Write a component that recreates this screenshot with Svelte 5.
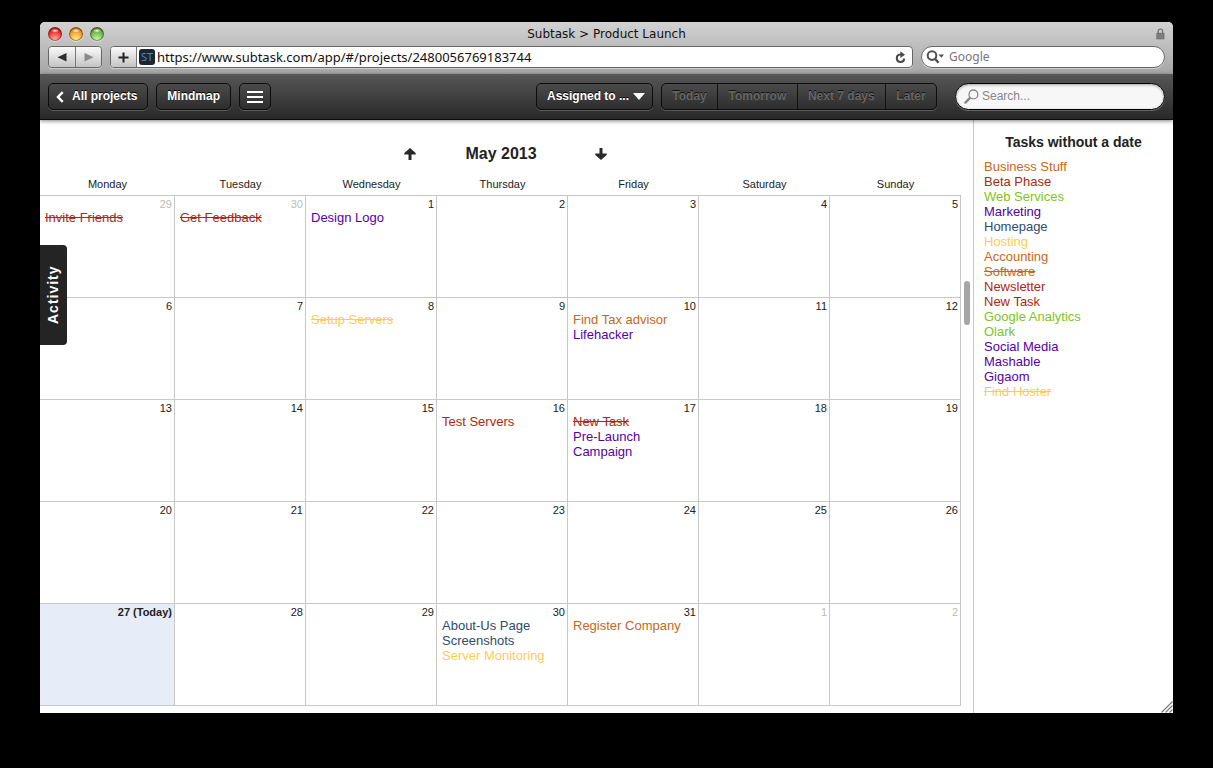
<script>
  const weekdays = ['Monday', 'Tuesday', 'Wednesday', 'Thursday', 'Friday', 'Saturday', 'Sunday'];
  const ranges = ['Today', 'Tomorrow', 'Next 7 days', 'Later'];

  const tasksByDay = {
    'prev-29': [{ name: 'Invite Friends', color: 'red', done: true }],
    'prev-30': [{ name: 'Get Feedback', color: 'red', done: true }],
    'may-1': [{ name: 'Design Logo', color: 'purple' }],
    'may-8': [{ name: 'Setup Servers', color: 'yellow', done: true }],
    'may-10': [
      { name: 'Find Tax advisor', color: 'orange' },
      { name: 'Lifehacker', color: 'purple' }
    ],
    'may-16': [{ name: 'Test Servers', color: 'red' }],
    'may-17': [
      { name: 'New Task', color: 'red', done: true },
      { name: 'Pre-Launch Campaign', color: 'purple' }
    ],
    'may-30': [
      { name: 'About-Us Page Screenshots', color: 'navy' },
      { name: 'Server Monitoring', color: 'yellow' }
    ],
    'may-31': [{ name: 'Register Company', color: 'orange' }]
  };

  const undated = [
    { name: 'Business Stuff', color: 'orange' },
    { name: 'Beta Phase', color: 'red' },
    { name: 'Web Services', color: 'green' },
    { name: 'Marketing', color: 'purple' },
    { name: 'Homepage', color: 'navy' },
    { name: 'Hosting', color: 'yellow' },
    { name: 'Accounting', color: 'orange' },
    { name: 'Software', color: 'orange', done: true },
    { name: 'Newsletter', color: 'red' },
    { name: 'New Task', color: 'red' },
    { name: 'Google Analytics', color: 'green' },
    { name: 'Olark', color: 'green' },
    { name: 'Social Media', color: 'purple' },
    { name: 'Mashable', color: 'purple' },
    { name: 'Gigaom', color: 'purple' },
    { name: 'Find Hoster', color: 'yellow', done: true }
  ];

  const today = 27;

  // Five weeks starting on Monday 29 April
  const weeks = Array.from({ length: 5 }, (_, w) =>
    Array.from({ length: 7 }, (_, d) => {
      const n = w * 7 + d - 1;
      const month = n < 1 ? 'prev' : n > 31 ? 'next' : 'may';
      const day = n < 1 ? n + 30 : n > 31 ? n - 31 : n;
      return { day, month, today: month === 'may' && day === today, tasks: tasksByDay[`${month}-${day}`] ?? [] };
    })
  );
</script>

{#snippet taskList(tasks)}
  <ul class="tasks">
    {#each tasks as task}
      <li class="task {task.color}" class:done={task.done}>{task.name}</li>
    {/each}
  </ul>
{/snippet}

<div class="window">
  <header class="chrome">
    <div class="titlebar">
      <div class="lights">
        <button class="light close" aria-label="Close"></button>
        <button class="light minimize" aria-label="Minimize"></button>
        <button class="light zoom" aria-label="Zoom"></button>
      </div>
      <div class="title">Subtask &gt; Product Launch</div>
      <svg class="lock" width="9" height="12" viewBox="0 0 9 12" aria-hidden="true">
        <path d="M2.2 5.5V3.2a2.2 2.2 0 0 1 4.4 0v2.3" fill="none" stroke="#6f6f6f" stroke-width="1.2" />
        <rect x="0.9" y="5.4" width="7" height="5.4" fill="#8a8a8a" stroke="#6c6c6c" />
        <path d="M1.5 7.2h6M1.5 9h6" stroke="#6f6f6f" stroke-width="0.8" />
      </svg>
    </div>
    <div class="toolbar">
      <div class="nav">
        <button aria-label="Back"><svg width="10" height="10" viewBox="0 0 10 10"><path d="M9.5 1v8.4L0.5 5.2z" fill="#2e2e2e" /></svg></button>
        <button aria-label="Forward"><svg width="10" height="10" viewBox="0 0 10 10"><path d="M0.5 1v8.4L9.5 5.2z" fill="#8b8b8b" /></svg></button>
      </div>
      <div class="address">
        <button class="plus" aria-label="Add bookmark"><svg width="11" height="11" viewBox="0 0 11 11"><path d="M5.5 0.5v10M0.5 5.5h10" stroke="#222" stroke-width="2" /></svg></button>
        <span class="favicon">ST</span>
        <input class="url" aria-label="Address" value="https://www.subtask.com/app/#/projects/2480056769183744" />
        <button class="reload" aria-label="Reload">
          <svg width="13" height="13" viewBox="0 0 13 13"><path d="M8.2 3.600H6.200a3.700 3.700 0 1 0 4 4" fill="none" stroke="#4a4a4a" stroke-width="2" /><path d="M6.400 0.300l4.600 3.500-4.600 3.100z" fill="#4a4a4a" /></svg>
        </button>
      </div>
      <label class="google">
        <svg width="19" height="14" viewBox="0 0 19 14"><circle cx="6" cy="5.6" r="4.3" fill="none" stroke="#505050" stroke-width="2" /><path d="M9 8.8l3.6 3.9" stroke="#505050" stroke-width="2.4" /><path d="M12.6 4.6h5.4l-2.7 3.2z" fill="#505050" /></svg>
        <input type="text" placeholder="Google" aria-label="Google" />
      </label>
    </div>
  </header>

  <nav class="appbar">
    <button class="btn back">
      <svg width="8" height="12" viewBox="0 0 8 12" aria-hidden="true"><path d="M6.7 1.2L2 6l4.7 4.8" fill="none" stroke="#fff" stroke-width="2.4" /></svg>
      All projects
    </button>
    <button class="btn">Mindmap</button>
    <button class="btn menu" aria-label="Menu">
      <svg width="16" height="12" viewBox="0 0 16 12"><path d="M0 1h16M0 6h16M0 11h16" stroke="#fff" stroke-width="2" /></svg>
    </button>
    <div class="spacer"></div>
    <div class="assigned">
      <select class="btn" aria-label="Assigned to">
        <option>Assigned to ...</option>
      </select>
      <svg width="12" height="7" viewBox="0 0 12 7" aria-hidden="true"><path d="M0 0h12L6 7z" fill="#fff" /></svg>
    </div>
    <div class="segments">
      {#each ranges as range}
        <button>{range}</button>
      {/each}
    </div>
    <label class="search">
      <svg width="15" height="15" viewBox="0 0 15 15"><circle cx="9.4" cy="5.4" r="4.4" fill="none" stroke="#888" stroke-width="1.3" /><path d="M5.8 9.2L1.4 13.6" stroke="#888" stroke-width="2.4" stroke-linecap="round" /></svg>
      <input type="text" placeholder="Search..." aria-label="Search" />
    </label>
  </nav>

  <main class="content">
    <section class="calendar">
      <div class="month">
        <button aria-label="Previous month"><svg width="12" height="12" viewBox="0 0 12 12"><path d="M6 0l5.700 5v1.500H7.500V12h-3V6.500H0.300V5z" fill="#2a2a2a" /></svg></button>
        <h1>May 2013</h1>
        <button aria-label="Next month"><svg width="12" height="12" viewBox="0 0 12 12"><path d="M6 12L0.300 7V5.500h4.200V0h3v5.500h4.200V7z" fill="#2a2a2a" /></svg></button>
      </div>
      <table>
        <thead>
          <tr>
            {#each weekdays as name}
              <th scope="col">{name}</th>
            {/each}
          </tr>
        </thead>
        <tbody>
          {#each weeks as week}
            <tr>
              {#each week as cell}
                <td class:today={cell.today}>
                  <div class="date" class:other={cell.month !== 'may'}>{cell.day}{cell.today ? ' (Today)' : ''}</div>
                  {#if cell.tasks.length}
                    {@render taskList(cell.tasks)}
                  {/if}
                </td>
              {/each}
            </tr>
          {/each}
        </tbody>
      </table>
      <div class="thumb"></div>
      <button class="activity">Activity</button>
    </section>

    <aside class="sidebar">
      <h2>Tasks without a date</h2>
      {@render taskList(undated)}
      <svg class="grip" width="12" height="12" viewBox="0 0 12 12" aria-hidden="true"><path d="M0.500 11.500l11-11M4.500 11.500l7-7M8.500 11.500l3-3" stroke="#777" stroke-width="1.100" /></svg>
    </aside>
  </main>
</div>

<style>
  :global(body) {
    background: #000;
  }

  .window {
    margin: 22px 40px 55px;
    border-radius: 5px 5px 0 0;
    overflow: hidden;
    background: #fff;
    color: #222;
    font: 13px/15px "Liberation Sans", Arial, sans-serif;
  }

  button,
  input,
  select {
    margin: 0;
    padding: 0;
    border: 0;
    background: none;
    font: inherit;
    color: inherit;
  }

  input {
    min-width: 0;
    flex: 1;
    outline: 0;
  }

  svg {
    display: block;
    flex: none;
  }

  ul {
    margin: 0;
    padding: 0;
    list-style: none;
  }

  /* Browser frame */
  .chrome {
    background: linear-gradient(#d2d2d2, #a6a6a6);
    font: 13px/16px "Noto Sans", "Open Sans", sans-serif;
    color: #111;
  }

  .titlebar {
    display: grid;
    grid-template-columns: 1fr auto 1fr;
    align-items: center;
    height: 24px;
    padding: 0 8px;
  }

  .title {
    font-family: "DejaVu Sans", sans-serif;
    font-size: 12px;
  }

  .lights {
    display: flex;
    gap: 7px;
  }

  .light {
    width: 14px;
    height: 14px;
    border-radius: 50%;
    box-shadow: inset 0 0 0 1px rgba(60, 20, 10, 0.45), inset 0 2px 2px rgba(70, 20, 0, 0.35), 0 1px 0 rgba(255, 255, 255, 0.4);
  }

  .close {
    background: radial-gradient(ellipse 4px 2px at 50% 26%, #fff, transparent), radial-gradient(circle at 50% 90%, #ffb0a8, #e42522 65%);
  }

  .minimize {
    background: radial-gradient(ellipse 4px 2px at 50% 26%, #fff, transparent), radial-gradient(circle at 50% 90%, #fff08a, #eb9525 65%);
  }

  .zoom {
    background: radial-gradient(ellipse 4px 2px at 50% 26%, #fff, transparent), radial-gradient(circle at 50% 90%, #cdf7a0, #5aad45 65%);
  }

  .lock {
    justify-self: end;
  }

  .toolbar {
    display: flex;
    gap: 8px;
    padding: 0 8px 6px;
  }

  .nav,
  .address,
  .google {
    display: flex;
    align-items: center;
    box-sizing: border-box;
    height: 22px;
    border: 1px solid #666;
    box-shadow: 0 1px 0 rgba(255, 255, 255, 0.4);
  }

  .nav,
  .address {
    border-radius: 4px;
  }

  .nav button,
  .plus {
    display: flex;
    align-items: center;
    justify-content: center;
    width: 26px;
    height: 20px;
    background: linear-gradient(#fafafa, #c4c4c4);
    border-radius: 3px;
  }

  .nav button:first-child {
    border-radius: 3px 0 0 3px;
  }

  .nav button + button {
    border-left: 1px solid #777;
    border-radius: 0 3px 3px 0;
  }

  .address {
    flex: 1;
    background: #fff;
  }

  .plus {
    border-right: 1px solid #777;
    border-radius: 3px 0 0 3px;
  }

  .favicon {
    width: 16px;
    margin: 0 2px;
    border-radius: 3px;
    background: #1c2630;
    color: #4d88bb;
    font-size: 11px;
    line-height: 16px;
    text-align: center;
  }

  .reload {
    padding: 0 5px;
  }

  .google {
    gap: 4px;
    width: 244px;
    padding: 0 4px;
    border-radius: 11px;
    background: #fff;
    font-size: 12px;
  }

  .google input::placeholder {
    color: #777;
    opacity: 1;
  }

  /* Application bar */
  .appbar {
    position: relative;
    z-index: 1;
    display: flex;
    align-items: center;
    gap: 8px;
    box-sizing: border-box;
    height: 46px;
    padding: 0 8px;
    background: linear-gradient(#575757, #282828);
    border-bottom: 1px solid #0c0c0c;
    box-shadow: 0 1px 4px rgba(0, 0, 0, 0.5);
    color: #fff;
    font-size: 12px;
    font-weight: bold;
  }

  .btn,
  .segments {
    display: flex;
    align-items: center;
    box-sizing: border-box;
    height: 27px;
    border: 1px solid #0c0c0c;
    border-radius: 5px;
    background: linear-gradient(#4b4b4b, #2d2d2d);
    box-shadow: 0 1px 0 rgba(255, 255, 255, 0.2);
  }

  .btn {
    padding: 0 10px;
    text-shadow: 0 -1px 0 #000;
  }

  .back {
    gap: 8px;
    padding: 0 10px 0 7px;
  }

  .menu {
    padding: 0 7px;
  }

  .spacer {
    flex: 1;
  }

  .assigned {
    display: grid;
    align-items: center;
  }

  .assigned select {
    grid-area: 1 / 1;
    padding: 0 22px 0 10px;
    appearance: none;
  }

  .assigned svg {
    grid-area: 1 / 1;
    justify-self: end;
    margin-right: 8px;
    pointer-events: none;
  }

  .segments {
    width: 276px;
  }

  .segments button {
    flex: 1 1 auto;
    height: 25px;
    color: #666;
    text-shadow: 0 -1px 0 #111;
  }

  .segments button + button {
    border-left: 1px solid #111;
  }

  .search {
    display: flex;
    align-items: center;
    gap: 3px;
    box-sizing: border-box;
    width: 210px;
    height: 27px;
    margin-left: 10px;
    padding: 0 8px;
    border: 1px solid #000;
    border-radius: 14px;
    background: #f7f7f7;
    box-shadow: inset 0 1px 3px rgba(0, 0, 0, 0.35), 0 1px 0 rgba(255, 255, 255, 0.25);
    font-weight: normal;
    color: #333;
  }

  .search input::placeholder {
    color: #888;
    opacity: 1;
  }

  /* Calendar */
  .content {
    display: flex;
  }

  .calendar {
    position: relative;
    flex: 1;
    padding: 24px 12px 7px 0;
  }

  .month {
    display: flex;
    align-items: center;
    justify-content: center;
    height: 19px;
    padding-left: 10px;
  }

  .month h1 {
    margin: 0 58px 0 49px;
    font-size: 16px;
    line-height: 19px;
  }

  table {
    width: 100%;
    table-layout: fixed;
    border-spacing: 0;
  }

  th {
    padding: 14px 0 4px;
    border-bottom: 1px solid #c8c8c8;
    font-size: 11px;
    line-height: 14px;
    font-weight: normal;
  }

  th:first-child {
    width: 135px;
  }

  td {
    box-sizing: border-box;
    height: 102px;
    padding: 2px 2px 0 5px;
    border-right: 1px solid #c8c8c8;
    border-bottom: 1px solid #c8c8c8;
    vertical-align: top;
  }

  .today {
    background: #e6ecf8;
    font-weight: bold;
  }

  .date {
    font-size: 11px;
    line-height: 12px;
    text-align: right;
  }

  .other {
    color: #bbb;
  }

  .task.red { color: #ae2710; }
  .task.orange { color: #c6681a; }
  .task.yellow { color: #fbcd55; }
  .task.green { color: #80c41c; }
  .task.purple { color: #5600a4; }
  .task.navy { color: #304a70; }

  .done {
    text-decoration: line-through;
  }

  .thumb {
    position: absolute;
    top: 161px;
    right: 3px;
    width: 6px;
    height: 44px;
    border-radius: 3px;
    background: #a6a6a6;
  }

  .activity {
    position: absolute;
    top: 125px;
    left: 0;
    width: 27px;
    height: 100px;
    border-radius: 4px 0 0 4px;
    background: #242424;
    color: #fff;
    font-size: 14px;
    font-weight: bold;
    letter-spacing: 1px;
    writing-mode: vertical-rl;
    transform: rotate(180deg);
  }

  .sidebar {
    position: relative;
    box-sizing: border-box;
    width: 200px;
    padding: 14px 0 14px 10px;
    border-left: 1px solid #c8c8c8;
  }

  .sidebar h2 {
    margin: 0 0 9px;
    padding-right: 10px;
    font-size: 14px;
    line-height: 16px;
    text-align: center;
  }

  .grip {
    position: absolute;
    right: 0;
    bottom: 0;
  }
</style>
